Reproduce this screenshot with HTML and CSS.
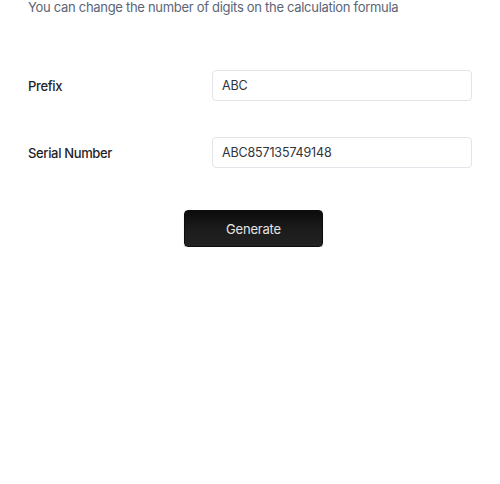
FILE: index.html
```html
<!DOCTYPE html>
<html>
<head>
<meta charset="utf-8">
<link rel="stylesheet" href="styles.css">
</head>
<body>
<div class="page">
  <p class="hint">You can change the number of digits on the calculation formula</p>
  <div class="form">
    <div class="row">
      <label class="label">Prefix</label>
      <input class="field" type="text" value="ABC">
    </div>
    <div class="row">
      <label class="label">Serial Number</label>
      <input class="field" type="text" value="ABC857135749148">
    </div>
  </div>
  <div class="actions">
    <button class="btn">Generate</button>
  </div>
</div>
</body>
</html>
```
FILE: styles.css
```css
html, body {
  margin: 0;
  padding: 0;
  background: #ffffff;
}
body {
  font-family: Inter, "Noto Sans", sans-serif;
  color: #1f2328;
}
.page {
  padding: 0 28px;
  width: 444px;
}
.hint {
  margin: 0;
  font-size: 13px;
  line-height: 14px;
  letter-spacing: -0.3px;
  color: #5b6577;
}
.form {
  display: flex;
  flex-direction: column;
  gap: 36px;
  margin-top: 56px;
}
.row {
  display: grid;
  grid-template-columns: 184px 260px;
  align-items: center;
}
.label {
  font-size: 13px;
  font-weight: 500;
  letter-spacing: -0.35px;
  color: #1f2328;
}
.field {
  box-sizing: border-box;
  width: 260px;
  height: 31px;
  margin: 0;
  padding: 0 10px 0 9px;
  border: 1px solid #e3e3ea;
  border-radius: 4px;
  font-family: Inter, "Noto Sans", sans-serif;
  font-size: 12.5px;
  letter-spacing: -0.15px;
  color: #30343b;
  background: #ffffff;
  outline: none;
}
.actions {
  display: flex;
  justify-content: center;
  padding-left: 7px;
  margin-top: 42px;
}
.btn {
  width: 139px;
  height: 37px;
  border: 1px solid #0c0c0c;
  border-radius: 4px;
  background: linear-gradient(#0c0c0c, #1c1c1c 55%, #222222);
  color: #e4e4e4;
  font-family: Inter, "Noto Sans", sans-serif;
  font-size: 13px;
  letter-spacing: -0.2px;
  padding: 0;
  box-shadow: 0 1px 1px rgba(0,0,0,0.25);
}
```
